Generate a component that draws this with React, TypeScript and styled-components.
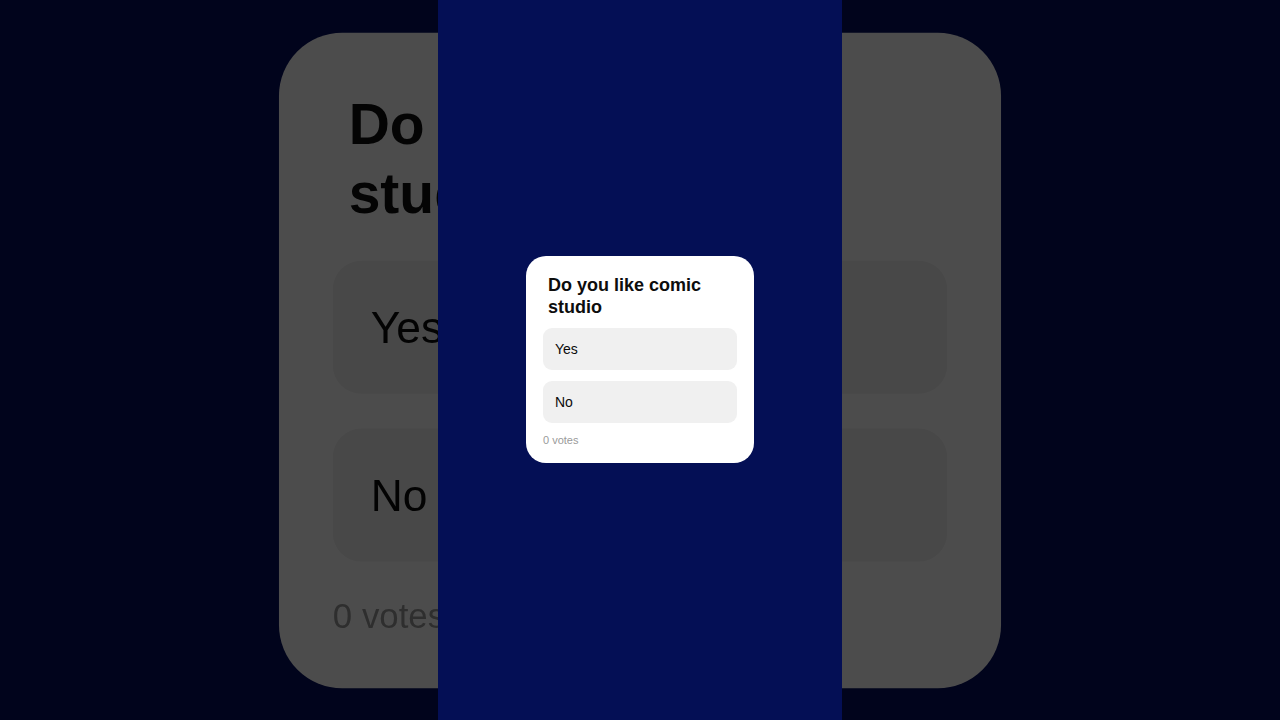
import React from "react";
import styled, { createGlobalStyle } from "styled-components";

const GlobalStyle = createGlobalStyle`
  html, body {
    margin: 0;
    padding: 0;
    background: #01041c;
    overflow: hidden;
  }
`;

const Stage = styled.div`
  position: relative;
  width: 100vw;
  height: 100vh;
  overflow: hidden;
  display: flex;
  justify-content: center;
  background: #01041c;
`;

// dimmed, enlarged copy of the frame shown behind the video column
const Backdrop = styled.div`
  position: absolute;
  inset: 0;
  display: flex;
  align-items: center;
  justify-content: center;
  filter: brightness(0.3) blur(0.6px);
  pointer-events: none;
`;

const Column = styled.main`
  position: relative;
  z-index: 1;
  width: 404px;
  height: 100%;
  background: #040f55;
  display: flex;
  align-items: center;
  justify-content: center;
`;

const Card = styled.section<{ $scale?: number }>`
  box-sizing: border-box;
  width: 228px;
  padding: 18px 17px 16px;
  margin-bottom: ${(p) => (p.$scale ? 0 : 2)}px;
  border-radius: 20px;
  background: #ffffff;
  font-family: "Liberation Sans", Arial, sans-serif;
  transform: scale(${(p) => p.$scale ?? 1});
  flex-shrink: 0;
`;

const Question = styled.h2`
  margin: 0 5px 10px;
  font-size: 18px;
  line-height: 22px;
  font-weight: 700;
  color: #0d0d0d;
`;

const Options = styled.div`
  display: grid;
  gap: 11px;
`;

const Option = styled.button`
  box-sizing: border-box;
  height: 42px;
  border: none;
  border-radius: 9px;
  background: #f0f0f0;
  padding: 0 12px;
  display: flex;
  align-items: center;
  font-family: inherit;
  font-size: 14px;
  color: #0a0a0a;
  text-align: left;
  cursor: pointer;
`;

const Votes = styled.div`
  margin-top: 11px;
  font-size: 11px;
  line-height: 13px;
  color: #9a9a9a;
`;

type PollProps = {
  question: string;
  options: string[];
  votes: number;
  scale?: number;
};

const PollCard: React.FC<PollProps> = ({ question, options, votes, scale }) => (
  <Card $scale={scale}>
    <Question>{question}</Question>
    <Options>
      {options.map((o) => (
        <Option key={o}>{o}</Option>
      ))}
    </Options>
    <Votes>{votes} votes</Votes>
  </Card>
);

const poll = {
  question: "Do you like comic studio",
  options: ["Yes", "No"],
  votes: 0,
};

export default function App() {
  return (
    <>
      <GlobalStyle />
      <Stage>
        <Backdrop aria-hidden>
          <PollCard {...poll} scale={3.167} />
        </Backdrop>
        <Column>
          <PollCard {...poll} />
        </Column>
      </Stage>
    </>
  );
}
